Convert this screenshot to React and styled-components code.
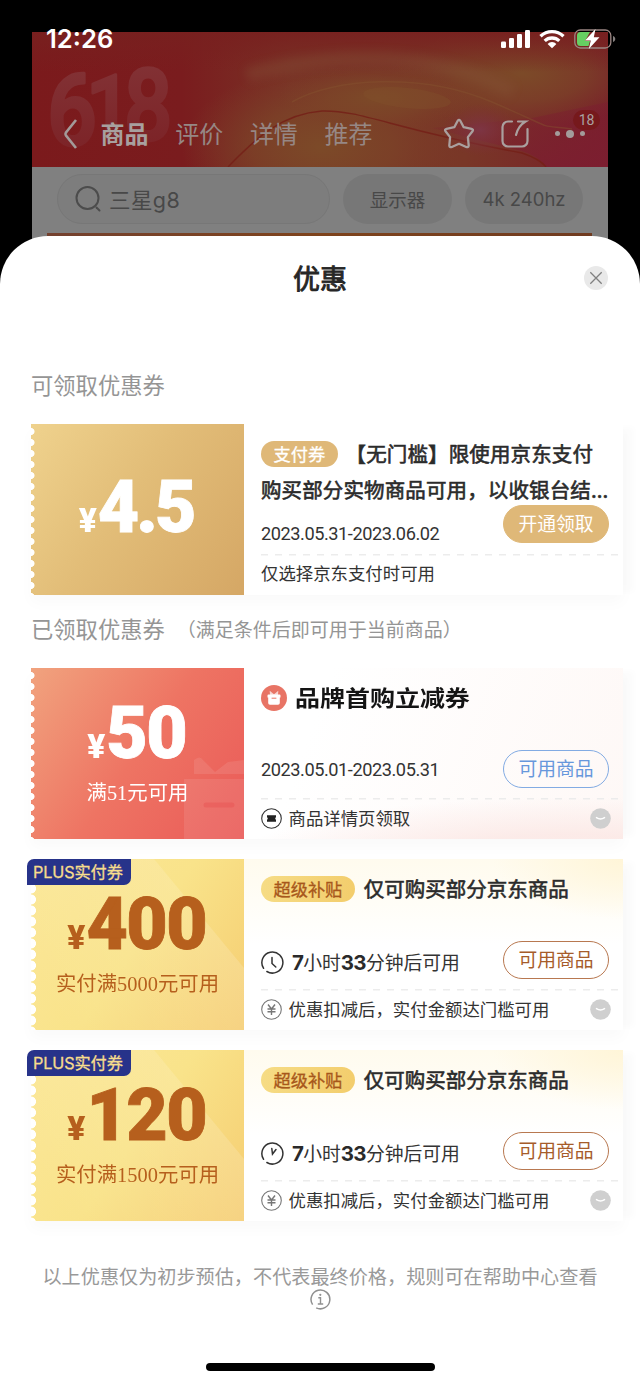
import React from 'react';
import styled, { createGlobalStyle } from 'styled-components';

const CJK = '"Noto Sans CJK SC", sans-serif';

const Global = createGlobalStyle`
  * { box-sizing: border-box; }
  body { margin: 0; background: #000; font-family: ${CJK}; }
  svg { display: block; flex: none; }
`;

const Phone = styled.main`
  position: relative;
  width: 640px;
  height: 1385px;
  overflow: hidden;
  background: #000;
`;

/* ---------- status bar ---------- */
const StatusBar = styled.header`
  position: absolute;
  z-index: 3;
  top: 0;
  left: 0;
  width: 640px;
  height: 78px;
  padding: 0 24px 0 46px;
  display: flex;
  align-items: center;
  gap: 9px;
  color: #fff;
`;
const Clock = styled.time`
  margin-right: auto;
  font: 600 25.6px/30px Inter, sans-serif;
`;

/* ---------- dimmed product page ---------- */
const Page = styled.section`
  width: 576px;
  height: 290px;
  margin: 0 32px;
  padding-top: 32px;
`;
const PageBody = styled.div`
  background: #808080;
  height: 258px;
`;
const Hero = styled.div`
  position: relative;
  height: 135px;
  overflow: hidden;
  background: #7a1b1d;
`;
const HeroArt = styled.svg`
  position: absolute;
  inset: 0;
`;
const Nav = styled.nav`
  position: relative;
  height: 135px;
  padding: 68px 23px 0 31px;
  display: flex;
  align-items: center;
  color: #a39a99;
`;
const Tab = styled.span`
  width: 48px;
  height: 38px;
  margin-left: ${(p) => (p.$active ? 22.5 : 26.7)}px;
  font-size: 24px;
  line-height: 36px;
  font-weight: ${(p) => (p.$active ? 700 : 400)};
  color: ${(p) => (p.$active ? '#a8a09f' : '#968784')};
`;
const NavIcons = styled.div`
  margin-left: auto;
  display: flex;
  align-items: center;
  gap: 26px;
`;
const More = styled.div`
  position: relative;
  width: 30px;
  display: flex;
  align-items: center;
  justify-content: space-between;
`;
const Dot = styled.i`
  width: ${(p) => p.$size}px;
  height: ${(p) => p.$size}px;
  border-radius: 50%;
  background: #a39c9b;
`;
const Badge = styled.span`
  position: absolute;
  left: 18px;
  top: -20px;
  width: 27px;
  height: 20px;
  border-radius: 10px;
  background: #76191c;
  color: #aaa3a3;
  font: 400 14px/21px Roboto, sans-serif;
  text-align: center;
`;
const SearchRow = styled.div`
  height: 66px;
  padding: 7px 25px 0;
  display: flex;
  gap: 13px;
`;
const Pill = styled.div`
  width: ${(p) => p.$w}px;
  height: 50px;
  padding: 0 0 1px ${(p) => (p.$field ? 17 : 0)}px;
  border-radius: 25px;
  border: ${(p) => (p.$field ? '1px solid #777' : '0')};
  background: ${(p) => (p.$field ? '#7d7d7d' : '#777')};
  display: flex;
  align-items: center;
  justify-content: ${(p) => (p.$field ? 'flex-start' : 'center')};
  gap: 7px;
  color: #484848;
  font-family: Inter, ${CJK};
  font-size: ${(p) => (p.$field ? 21.5 : 18.5)}px;
`;
const SearchText = styled.span`
  letter-spacing: 0.4px;
`;
const Banner = styled.div`
  height: 20px;
  margin: 0 16px 0 15px;
  background: linear-gradient(90deg, #74412f, #7e431c 50%, #703b20);
`;

/* ---------- sheet ---------- */
const Sheet = styled.section`
  position: relative;
  z-index: 2;
  height: 1149px;
  margin-top: -54px;
  border-radius: 48px 48px 0 0;
  background: #fff;
  overflow: hidden;
`;
const SheetHeader = styled.div`
  height: 84px;
  margin-bottom: 49px;
  padding: 0 32px;
  display: grid;
  grid-template-columns: 24px 1fr 24px;
  align-items: center;
`;
const SheetTitle = styled.h1`
  grid-column: 2;
  margin: 0;
  text-align: center;
  font-size: 27px;
  line-height: 40px;
  font-weight: 400;
  -webkit-text-stroke: 0.9px #262626;
  color: #262626;
`;
const GroupLabel = styled.h2`
  margin: ${(p) => (p.$next ? 18 : 0)}px 0 25px 31px;
  display: flex;
  align-items: center;
  height: 30px;
  font-size: 22.3px;
  line-height: 30px;
  font-weight: 400;
  color: #959595;
  white-space: nowrap;
`;
const GroupNote = styled.small`
  margin-left: 12px;
  padding-top: 2px;
  font-size: 19px;
`;
const CouponList = styled.div`
  display: flex;
  flex-direction: column;
  gap: 20px;
`;

/* ---------- coupon ---------- */
const themes = {
  gold: {
    stub: 'linear-gradient(125deg, #efd28d 0%, #e2bd78 45%, #d5a765 100%)',
    ink: '#fff',
    line: '#dfb878',
    button: '#fff',
    fill: '#dfb878',
    tag: '#dfb878',
    tagInk: '#fff',
    panel: '#fff',
    notch: 3.5,
  },
  red: {
    stub: 'linear-gradient(125deg, #f1a37e 0%, #ee7463 50%, #ea5a58 100%)',
    ink: '#fff',
    line: '#82abe3',
    button: '#6797dc',
    fill: 'transparent',
    panel:
      'radial-gradient(ellipse 330px 62px at 85% 112%, rgba(251, 231, 228, .8) 0 40%, transparent 100%), linear-gradient(110deg, #fff 20%, #fef8f6 100%)',
    notch: 3.5,
  },
  plus: {
    stub: 'linear-gradient(125deg, #fbe798 0%, #f9e38a 50%, #f5cc70 100%)',
    ink: '#b65f1d',
    line: '#b87850',
    button: '#a65c2a',
    fill: 'transparent',
    tag: 'linear-gradient(100deg, #f6dc85, #f3cd6c)',
    tagInk: '#a7571b',
    panel:
      'radial-gradient(ellipse 130px 60px at 100% 0, #fff5d8, transparent), linear-gradient(180deg, #fffbee 0, #fff 50%)',
    notch: 5,
  },
};

const Coupon = styled.article`
  position: relative;
  width: 592px;
  height: 171px;
  margin-left: 31px;
  display: flex;
  box-shadow: 0 8px 14px rgba(0, 0, 0, 0.022), 14px 0 6px -3px rgba(0, 0, 0, 0.014);
`;
const Stub = styled.div`
  position: relative;
  width: 213px;
  height: 171px;
  padding-top: ${(p) => (p.$sub ? 32 : 50)}px;
  display: flex;
  flex-direction: column;
  align-items: center;
  background: ${(p) => p.$t.stub};
  color: ${(p) => p.$t.ink};
  mask-image: radial-gradient(
    circle at 0 5.5px,
    transparent ${(p) => p.$t.notch - 0.4}px,
    #000 ${(p) => p.$t.notch + 0.4}px
  );
  mask-size: 100% 11px;
  mask-position: 0 2px;
`;
const StubArt = styled.svg`
  position: absolute;
  inset: 0;
`;
const Price = styled.div`
  position: relative;
  display: flex;
  align-items: baseline;
  height: 68px;
  font: 900 71.5px/68px Roboto, sans-serif;
`;
const Amount = styled.span`
  display: inline-block;
  letter-spacing: ${(p) => p.$track}px;
  margin-right: ${(p) => -p.$track}px;
  -webkit-text-stroke: 0.8px currentColor;
`;
const Currency = styled.span`
  margin-right: 1px;
  font-size: 33.5px;
  font-weight: 900;
`;
const Condition = styled.div`
  position: relative;
  margin-top: 11px;
  font: 400 20.4px/28px 'Liberation Serif', ${CJK};
  white-space: nowrap;
`;
const PlusFlag = styled.div`
  position: absolute;
  left: -4px;
  top: 0;
  width: 104px;
  height: 26px;
  padding-left: 6px;
  border-radius: 7px 0 7px 0;
  background: #27338a;
  color: #f7dd8c;
  font: 400 16.2px/26px Inter, ${CJK};
  letter-spacing: -0.1px;
  -webkit-text-stroke: 0.3px #f7dd8c;
  white-space: nowrap;
`;
const Panel = styled.div`
  width: 379px;
  padding-left: 17px;
  background: ${(p) => p.$t.panel};
`;
const Body = styled.div`
  height: 130px;
  padding: 11px 14px 11px 0;
  display: flex;
  flex-direction: column;
`;
const Title = styled.h3`
  margin: 0 -4px -2px 0;
  font-size: 20.5px;
  line-height: 36px;
  font-weight: 400;
  letter-spacing: ${(p) => p.$track || 0}px;
  -webkit-text-stroke: 0.6px #2b2b2b;
  color: #2b2b2b;
  white-space: nowrap;
`;
const Tag = styled.span`
  display: inline-block;
  height: 26px;
  margin-right: ${(p) => p.$gap}px;
  padding: 0 12.5px;
  border-radius: 13px;
  background: ${(p) => p.$t.tag};
  color: ${(p) => p.$t.tagInk};
  font-size: 17.2px;
  line-height: 25px;
  letter-spacing: 0;
  -webkit-text-stroke: 0.3px ${(p) => p.$t.tagInk};
  vertical-align: 1px;
`;
const BrandTitle = styled.h3`
  margin: 0;
  height: 36px;
  padding-top: 1px;
  display: flex;
  align-items: center;
  gap: 8px;
  color: #141414;
`;
const BrandName = styled.span`
  padding-bottom: 2px;
  font-size: 22.5px;
  line-height: 34px;
  font-weight: 700;
  transform: scale(1.11, 0.94);
  transform-origin: 0 50%;
  white-space: nowrap;
`;
const Meta = styled.div`
  height: 37px;
  margin-top: auto;
  display: flex;
  align-items: ${(p) => (p.$low ? 'flex-end' : 'center')};
  justify-content: space-between;
`;
const DateRange = styled.span`
  padding-top: 2px;
  font: 400 18.2px/19px Roboto, sans-serif;
  letter-spacing: -0.45px;
  color: #333;
`;
const Countdown = styled.span`
  display: flex;
  align-items: center;
  gap: 8px;
  padding-top: 5px;
  font-size: 18.8px;
  line-height: 28px;
  color: #333;
  white-space: nowrap;
`;
const Num = styled.b`
  font: 700 20.5px/28px Inter, sans-serif;
  letter-spacing: -0.7px;
  color: #2a2a2a;
`;
const Action = styled.button`
  width: 106px;
  height: 38px;
  padding: 0 0 2px;
  border: 1.4px solid ${(p) => p.$t.line};
  border-radius: 19px;
  background: ${(p) => p.$t.fill};
  color: ${(p) => p.$t.button};
  font: 400 18.8px/34px ${CJK};
`;
const Foot = styled.div`
  height: 41px;
  padding: 0 12px ${(p) => (p.$plain ? 4 : 1)}px 0;
  display: flex;
  align-items: center;
  gap: 6.5px;
  font-size: 17.4px;
  line-height: 26px;
  color: #333;
  white-space: nowrap;
  background: repeating-linear-gradient(90deg, #ececec 0 7px, transparent 7px 14px) 0 0 / 360px 1.5px no-repeat;
`;
const Expand = styled.span`
  margin-left: auto;
`;

/* ---------- footer ---------- */
const Disclaimer = styled.footer`
  margin-top: 42px;
  display: flex;
  flex-direction: column;
  align-items: center;
  font-size: 19.15px;
  line-height: 26px;
  color: #999;
  white-space: nowrap;
`;
const HomeBar = styled.div`
  width: 229px;
  height: 8px;
  margin: 53px auto 0 206px;
  border-radius: 4px;
  background: #000;
`;

/* ---------- icons ---------- */
const Signal = () => (
  <svg width="30" height="20" fill="#fff">
    <rect x="1" y="12.5" width="5" height="6.5" rx="1.3" />
    <rect x="9" y="9" width="5" height="10" rx="1.3" />
    <rect x="17" y="5" width="5" height="14" rx="1.3" />
    <rect x="25" y="1" width="5" height="18" rx="1.3" />
  </svg>
);
const Wifi = () => (
  <svg width="26" height="20" fill="none" stroke="#fff" strokeWidth="3.3">
    <path d="M1.5 7.2a16.5 16.5 0 0 1 23 0" />
    <path d="M5.700 11.900a10.600 10.600 0 0 1 14.600 0" />
    <path d="M13 19.200 8.600 14.900a6.200 6.200 0 0 1 8.800 0Z" fill="#fff" stroke="none" />
  </svg>
);
const Battery = () => (
  <svg width="42" height="22" viewBox="0 0 42 22">
    <rect x="0.8" y="2" width="36" height="18" rx="5.5" fill="none" stroke="#9b8582" strokeWidth="1.3" />
    <path d="M39 8v6c3-1 3-5 0-6Z" fill="#857f7e" />
    <path d="M6.500 4H16l-5 9h5l-1.500 5h-8A3.500 3.500 0 0 1 3 14.500v-7A3.500 3.500 0 0 1 6.500 4Z" fill="#66cf62" />
    <path d="M21.500 1 11 12.500h5.800L14.800 21 25.500 9.300h-5.700Z" fill="#fff" />
  </svg>
);
const Back = () => (
  <svg width="15" height="30" fill="none" stroke="#a39a99" strokeWidth="2.6">
    <path d="M13 1 2.800 13.800Q2.100 15 2.800 16.200L13 29" />
  </svg>
);
const Star = () => (
  <svg width="32" height="32" fill="none" stroke="#aaa09f" strokeWidth="2.3" strokeLinejoin="round">
    <path d="M14.700 2.800q1.300-1.800 2.600 0l3.400 6.400 7.800 1.600q2.300.7 1 2.500l-4.600 5.800.8 8.400q-.3 2.200-2.500 1.500L16 25.800 8.800 29q-2.200.7-2.500-1.500l.8-8.400-4.600-5.800q-1.300-1.800 1-2.500l7.800-1.600Z" />
  </svg>
);
const Share = () => (
  <svg width="28" height="28" fill="none" stroke="#aaa09f" strokeWidth="2.200" strokeLinecap="round">
    <path d="M11 1.500H7A5.500 5.500 0 0 0 1.500 7v14A5.500 5.500 0 0 0 7 26.500h14a5.500 5.500 0 0 0 5.500-5.500V9" />
    <path d="M17 1.500h7.500q-7.500 4.500-9.500 13.500" />
  </svg>
);
const Magnifier = () => (
  <svg width="27" height="27" fill="none" stroke="#4c4c4c" strokeWidth="2" strokeLinecap="round">
    <circle cx="12.500" cy="13" r="11" />
    <path d="M21.500 22.500 24.500 25.500" />
  </svg>
);
const Close = () => (
  <svg width="24" height="24">
    <circle cx="12" cy="12" r="12" fill="#e9e9e9" />
    <path d="M6.300 6.300 17.700 17.700M17.700 6.300 6.300 17.700" stroke="#808080" strokeWidth="1.300" />
  </svg>
);
const Gift = () => (
  <svg width="26" height="26">
    <circle cx="13" cy="13" r="13" fill="#e87465" />
    <path d="M8.700 5.800 13 9.200 17.300 5.800 17 10H9Z" fill="#f8d5d0" />
    <path d="M7.500 9.500h11q1 0 1 1v2h-.7v5.500q0 1.800-1.800 1.800H9q-1.800 0-1.800-1.800v-5.500h-.7v-2q0-1 1-1Z" fill="#fff" />
    <path d="M11 13.200h4" stroke="#e87465" strokeWidth="1" strokeLinecap="round" />
  </svg>
);
const Ticket = () => (
  <svg width="21" height="21" fill="none">
    <circle cx="10.500" cy="10.500" r="9.800" stroke="#333" strokeWidth="1.100" />
    <path d="M6 7.300h9v1.900a1.500 1.500 0 0 0 0 2.600v1.900H6v-1.900a1.500 1.500 0 0 0 0-2.600Z" fill="#222" />
  </svg>
);
const Yen = () => (
  <svg width="21" height="21" fill="none" stroke="#777" strokeWidth="1.100">
    <circle cx="10.500" cy="10.500" r="9.800" />
    <path d="M7 5.500l3.500 4.500L14 5.500M10.500 10v6M6.500 10h8M6.500 12.800h8" strokeWidth="1.400" />
  </svg>
);
const Timer = ({ late }) => (
  <svg width="23" height="23" fill="none" stroke="#333" strokeWidth="1.500" strokeLinecap="round">
    <path d="M2.600 17.300a10.500 10.500 0 1 1 3.300 3.200" />
    <path d={late ? 'M10.800 6.500l.7 5.500 3.500-4.500' : 'M11 6.500v6l3.800 3.500'} />
  </svg>
);
const Chevron = () => (
  <svg width="21" height="21" fill="none">
    <circle cx="10.500" cy="10.500" r="10.300" fill="#cfcfcf" />
    <path d="M6.500 9.600q4 2.700 8 0" stroke="#fff" strokeWidth="1.500" strokeLinecap="round" />
  </svg>
);
const Info = () => (
  <svg width="21" height="21" fill="none" stroke="#909090" strokeWidth="1.500">
    <path d="M2.600 15.600a9.400 9.400 0 1 1 3.600 3.200" />
    <path d="M8.300 8.800h2.200v6M7.800 15h5.400" strokeWidth="1.400" />
    <circle cx="10.300" cy="5.800" r="1.100" fill="#909090" stroke="none" />
  </svg>
);

const Waves = () => (
  <HeroArt width="576" height="135">
    <defs>
      <linearGradient id="base">
        <stop offset="0" stopColor="#7b1a1c" />
        <stop offset=".26" stopColor="#7a1c1e" />
        <stop offset=".45" stopColor="#793226" />
        <stop offset=".75" stopColor="#793727" />
        <stop offset="1" stopColor="#781f2a" />
      </linearGradient>
      <radialGradient id="glow">
        <stop offset="0" stopColor="#7c4a28" />
        <stop offset=".5" stopColor="#7c4528" stopOpacity=".7" />
        <stop offset="1" stopColor="#7c3e28" stopOpacity="0" />
      </radialGradient>
      <linearGradient id="top" x2="0" y2="1">
        <stop offset="0" stopColor="#78201f" stopOpacity=".9" />
        <stop offset="1" stopColor="#78201f" stopOpacity="0" />
      </linearGradient>
      <linearGradient id="corner" x1="1" y1="1" x2="0" y2="0">
        <stop offset="0" stopColor="#7c1e30" />
        <stop offset="1" stopColor="#7c1e30" stopOpacity="0" />
      </linearGradient>
      <linearGradient id="digit" x2="0" y2="1">
        <stop offset="0" stopColor="#833437" />
        <stop offset="1" stopColor="#7b2024" />
      </linearGradient>
      <radialGradient id="pink">
        <stop offset="0" stopColor="#7d3544" />
        <stop offset="1" stopColor="#7d3035" stopOpacity="0" />
      </radialGradient>
      <filter id="soft" x="-10%" y="-50%" width="120%" height="200%">
        <feGaussianBlur stdDeviation="5" />
      </filter>
    </defs>
    <rect width="576" height="135" fill="url(#base)" />
    <ellipse cx="290" cy="115" rx="140" ry="80" fill="url(#glow)" />
    <ellipse cx="490" cy="42" rx="130" ry="55" fill="url(#glow)" />
    <ellipse cx="345" cy="66" rx="100" ry="34" fill="url(#glow)" />
    <rect width="576" height="40" fill="url(#top)" />
    <path d="M514 135Q508 125 490 119L400 96L500 86L576 70V135Z" fill="url(#corner)" />
    <path d="M196 135C225 105 250 82 290 79C330 78 360 97 490 121Q508 127 514 135" fill="none" stroke="#742018" strokeWidth="1.400" opacity=".85" />
    <path d="M260 70C300 46 390 40 460 70S500 92 540 97" fill="none" stroke="#85522f" strokeWidth="1.500" opacity=".45" />
    <path d="M215 43C290 22 400 15 480 60" fill="none" stroke="#87583a" strokeWidth="14" opacity=".3" filter="url(#soft)" />
    <ellipse cx="375" cy="66" rx="44" ry="10" transform="rotate(6 375 66)" fill="#82502b" opacity=".4" />
    <ellipse cx="448" cy="98" rx="38" ry="26" fill="url(#pink)" />
    <g fill="url(#digit)" stroke="url(#digit)" strokeWidth="3" strokeLinejoin="round" fontFamily="Roboto, sans-serif" fontSize="100" fontWeight="500">
      <text transform="translate(15 113) scale(.88 1)">6</text>
      <text transform="translate(54 109) scale(.8 .92)">1</text>
      <text transform="translate(92 108) scale(.85 1)">8</text>
    </g>
  </HeroArt>
);

const GiftArt = () => (
  <StubArt width="213" height="171">
    <g fill="#fff" opacity=".09">
      <path d="M163 106V92q6-5 9 0l12 12 13-10 16-2v14Z" />
      <path d="M153 111h60v60h-60Z" />
    </g>
    <path d="M175 137h26" stroke="#ea5a58" strokeWidth="5" strokeLinecap="round" opacity=".6" />
  </StubArt>
);
const RayArt = () => (
  <StubArt width="213" height="171">
    <defs>
      <linearGradient id="ray" x1="0" y1=".6" x2="1" y2=".2">
        <stop offset="0" stopColor="#fff" stopOpacity="0" />
        <stop offset="1" stopColor="#fff" stopOpacity=".3" />
      </linearGradient>
    </defs>
    <path d="M0 0H123L213 109V171H0Z" fill="url(#ray)" opacity=".6" />
  </StubArt>
);

const PlusCoupon = ({ amount, need, late }) => {
  const t = themes.plus;
  return (
    <Coupon>
      <Stub $t={t} $sub>
        <RayArt />
        <Price><Currency>¥</Currency><Amount $track={-1.5}>{amount}</Amount></Price>
        <Condition>{need}</Condition>
      </Stub>
      <PlusFlag>PLUS实付券</PlusFlag>
      <Panel $t={t}>
        <Body>
          <Title><Tag $t={t} $gap={9}>超级补贴</Tag>仅可购买部分京东商品</Title>
          <Meta>
            <Countdown>
              <Timer late={late} />
              <span><Num>7</Num>小时<Num>33</Num>分钟后可用</span>
            </Countdown>
            <Action $t={t}>可用商品</Action>
          </Meta>
        </Body>
        <Foot><Yen />优惠扣减后，实付金额达门槛可用<Expand><Chevron /></Expand></Foot>
      </Panel>
    </Coupon>
  );
};

export default function App() {
  const { gold, red } = themes;
  return (
    <Phone>
      <Global />
      <StatusBar>
        <Clock>12:26</Clock>
        <Signal />
        <Wifi />
        <Battery />
      </StatusBar>

      <Page>
        <PageBody>
          <Hero>
            <Waves />
            <Nav>
              <Back />
              <Tab $active>商品</Tab>
              <Tab>评价</Tab>
              <Tab>详情</Tab>
              <Tab>推荐</Tab>
              <NavIcons>
                <Star />
                <Share />
                <More>
                  <Dot $size={5} />
                  <Dot $size={8} />
                  <Dot $size={5} />
                  <Badge>18</Badge>
                </More>
              </NavIcons>
            </Nav>
          </Hero>
          <SearchRow>
            <Pill $w={273} $field><Magnifier /><SearchText>三星g8</SearchText></Pill>
            <Pill $w={109}>显示器</Pill>
            <Pill $w={118}>4k 240hz</Pill>
          </SearchRow>
          <Banner />
        </PageBody>
      </Page>

      <Sheet>
        <SheetHeader>
          <SheetTitle>优惠</SheetTitle>
          <Close />
        </SheetHeader>

        <GroupLabel>可领取优惠券</GroupLabel>
        <Coupon>
          <Stub $t={gold}>
            <Price><Currency>¥</Currency><Amount $track={-3}>4.5</Amount></Price>
          </Stub>
          <Panel $t={gold}>
            <Body>
              <Title $track={0.12}>
                <Tag $t={gold} $gap={8}>支付券</Tag>【无门槛】限使用京东支付
                <br />
                购买部分实物商品可用，以收银台结...
              </Title>
              <Meta $low>
                <DateRange>2023.05.31-2023.06.02</DateRange>
                <Action $t={gold}>开通领取</Action>
              </Meta>
            </Body>
            <Foot $plain>仅选择京东支付时可用</Foot>
          </Panel>
        </Coupon>

        <GroupLabel $next>
          已领取优惠券<GroupNote>（满足条件后即可用于当前商品）</GroupNote>
        </GroupLabel>
        <CouponList>
          <Coupon>
            <Stub $t={red} $sub>
              <GiftArt />
              <Price><Currency>¥</Currency><Amount $track={-1.5}>50</Amount></Price>
              <Condition>满51元可用</Condition>
            </Stub>
            <Panel $t={red}>
              <Body>
                <BrandTitle><Gift /><BrandName>品牌首购立减券</BrandName></BrandTitle>
                <Meta>
                  <DateRange>2023.05.01-2023.05.31</DateRange>
                  <Action $t={red}>可用商品</Action>
                </Meta>
              </Body>
              <Foot><Ticket />商品详情页领取<Expand><Chevron /></Expand></Foot>
            </Panel>
          </Coupon>
          <PlusCoupon amount="400" need="实付满5000元可用" />
          <PlusCoupon amount="120" need="实付满1500元可用" late />
        </CouponList>

        <Disclaimer>
          以上优惠仅为初步预估，不代表最终价格，规则可在帮助中心查看
          <Info />
        </Disclaimer>
        <HomeBar />
      </Sheet>
    </Phone>
  );
}
